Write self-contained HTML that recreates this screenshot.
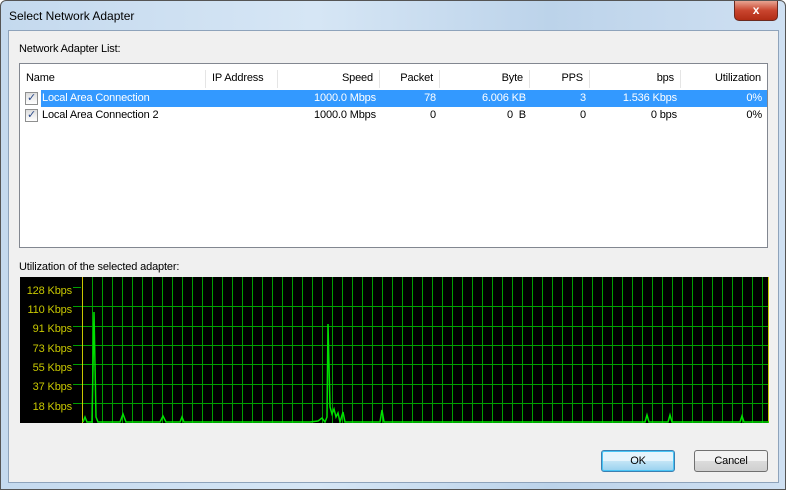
<!DOCTYPE html>
<html><head><style>
*{margin:0;padding:0;box-sizing:border-box}
body{width:786px;height:490px;overflow:hidden;font-family:"Liberation Sans",sans-serif;font-size:11px;letter-spacing:-0.15px;color:#000;background:#fff}
.win{position:absolute;left:0;top:0;width:786px;height:490px;background:linear-gradient(90deg,#c4d9ee,#d6e6f5 40%,#bcd3ea 70%,#cfe0f2);border:1px solid #555;border-radius:6px 6px 0 0}
.title{position:absolute;left:8px;top:8px;font-size:12px;color:#000;letter-spacing:0}
.close{position:absolute;left:733px;top:0;width:44px;height:20px;background:linear-gradient(#e8a492,#c9452e 50%,#b12c15);border:1px solid #6b2a20;border-top:none;border-radius:0 0 5px 5px;color:#fff;font-weight:bold;text-align:center;font-size:12px;line-height:18px}
.client{position:absolute;left:7px;top:29px;width:771px;height:453px;background:#f0f0f0;border:1px solid #8ea3bb}
.abs{position:absolute}
.list{position:absolute;left:10px;top:32px;width:749px;height:185px;background:#fff;border:1px solid #828790}
.hd{position:absolute;top:6px;height:18px;line-height:16px;color:#000;border-right:1px solid #e5e5e5;padding:0 6px}
.row{position:absolute;left:21px;width:726px;height:17px;line-height:17px}
.c{position:absolute;top:0}
.cb{position:absolute;width:13px;height:13px;border:1px solid #8e8f8f;background:linear-gradient(#ddd,#fff);color:#2b4a8a;font-size:11px;line-height:11px;text-align:center}
.btn{position:absolute;top:419px;width:74px;height:22px;border:1px solid #707070;border-radius:3px;background:linear-gradient(#f2f2f2 50%,#dcdcdc 50%,#cfcfcf);text-align:center;line-height:20px;font-size:11px}
</style></head><body>
<div class="win">
<div class="title">Select Network Adapter</div>
<div class="close">x</div>
<div class="client">
<div class="abs" style="left:10px;top:12px">Network Adapter List:</div>
<div class="list">
<div class="hd" style="left:0;width:186px">Name</div>
<div class="hd" style="left:186px;width:72px">IP Address</div>
<div class="hd" style="left:258px;width:102px;text-align:right">Speed</div>
<div class="hd" style="left:360px;width:60px;text-align:right">Packet</div>
<div class="hd" style="left:420px;width:90px;text-align:right">Byte</div>
<div class="hd" style="left:510px;width:60px;text-align:right">PPS</div>
<div class="hd" style="left:570px;width:91px;text-align:right">bps</div>
<div class="hd" style="left:661px;width:86px;text-align:right;border:none">Utilization</div>
<div class="cb" style="left:5px;top:28px">✓</div>
<div class="cb" style="left:5px;top:45px">✓</div>
<div class="row" style="top:26px;background:#3399ff;color:#fff">
<span class="c" style="left:1px">Local Area Connection</span>
<span class="c" style="right:391px">1000.0 Mbps</span>
<span class="c" style="right:331px">78</span>
<span class="c" style="right:241px">6.006 KB</span>
<span class="c" style="right:181px">3</span>
<span class="c" style="right:90px">1.536 Kbps</span>
<span class="c" style="right:5px">0%</span>
</div>
<div class="row" style="top:43px">
<span class="c" style="left:1px">Local Area Connection 2</span>
<span class="c" style="right:391px">1000.0 Mbps</span>
<span class="c" style="right:331px">0</span>
<span class="c" style="right:241px">0&nbsp; B</span>
<span class="c" style="right:181px">0</span>
<span class="c" style="right:90px">0 bps</span>
<span class="c" style="right:5px">0%</span>
</div>
</div>
<div class="abs" style="left:10px;top:230px">Utilization of the selected adapter:</div>
<svg class="abs" style="left:11px;top:246px" width="749" height="146" viewBox="0 0 749 146" shape-rendering="crispEdges">
<defs><pattern id="g" x="2" y="0" width="10" height="146" patternUnits="userSpaceOnUse"><rect x="0" y="0" width="1" height="146" fill="#00a000"/></pattern></defs>
<rect width="749" height="146" fill="#000"/>
<rect x="63" y="0" width="686" height="146" fill="url(#g)"/>
<g fill="#00a000">
<rect x="53" y="29" width="696" height="1"/><rect x="53" y="49" width="696" height="1"/><rect x="53" y="68" width="696" height="1"/>
<rect x="53" y="87" width="696" height="1"/><rect x="53" y="107" width="696" height="1"/><rect x="53" y="126" width="696" height="1"/>
<rect x="53" y="10" width="8" height="1"/>
</g>
<rect x="62" y="0" width="1" height="146" fill="#c8c800"/>
<rect x="748" y="0" width="1" height="146" fill="#c8c800"/>
<g fill="#c8c800" font-family="Liberation Sans" font-size="11" text-anchor="end" shape-rendering="auto">
<text x="52" y="17">128 Kbps</text><text x="52" y="36">110 Kbps</text><text x="52" y="55">91 Kbps</text>
<text x="52" y="75">73 Kbps</text><text x="52" y="94">55 Kbps</text><text x="52" y="113">37 Kbps</text><text x="52" y="133">18 Kbps</text>
</g>
<path shape-rendering="auto" d="M63 145 L65 140 L67 145 L72 145 L74 35 L76 140 L78 145 L100 145 L103 137 L106 145 L140 145 L143 139 L146 145 L160 145 L162 140 L164 145 L200 145 L230 145 L290 145 L298 144 L302 141 L305 145 L307 140 L308 47 L310 130 L312 137 L314 132 L316 140 L318 136 L320 145 L323 135 L325 145 L360 145 L362 133 L364 145 L450 145 L500 145 L550 145 L625 145 L627 138 L629 145 L648 145 L650 138 L652 145 L700 145 L720 145 L722 139 L724 145 L749 145" stroke="#00e000" stroke-width="1.5" fill="none"/>
</svg>
<div class="btn" style="left:592px;border-color:#3c7fb1;background:linear-gradient(#e5f4fc 50%,#c4e5f6 50%,#98d1ef);box-shadow:inset 0 0 0 1px #48c4f5">OK</div>
<div class="btn" style="left:685px">Cancel</div>
</div>
</div>
</body></html>
